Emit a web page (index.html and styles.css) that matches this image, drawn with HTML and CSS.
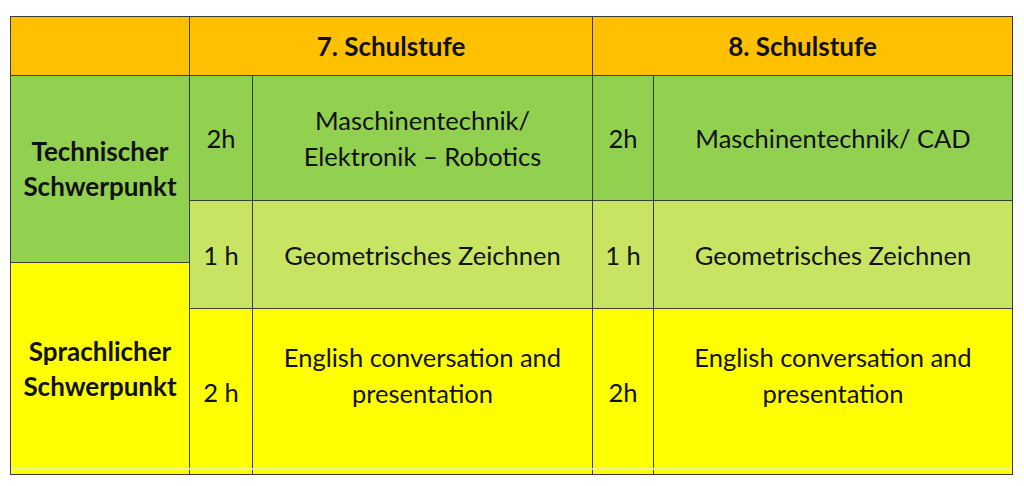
FILE: index.html
```html
<!DOCTYPE html>
<html lang="de">
<head>
<meta charset="utf-8">
<title>Schwerpunkte</title>
<link rel="stylesheet" href="styles.css">
</head>
<body>
<div class="table">
  <div class="cell orange corner"></div>
  <div class="cell orange head span-a">7. Schulstufe</div>
  <div class="cell orange head span-b">8. Schulstufe</div>

  <div class="cell green side tech">Technischer<br>Schwerpunkt</div>
  <div class="cell green r1">2h</div>
  <div class="cell green r1">Maschinentechnik/<br>Elektronik – Robotics</div>
  <div class="cell green r1">2h</div>
  <div class="cell green r1">Maschinentechnik/ CAD</div>

  <div class="cell lime r2">1 h</div>
  <div class="cell lime r2">Geometrisches Zeichnen</div>
  <div class="cell lime r2">1 h</div>
  <div class="cell lime r2">Geometrisches Zeichnen</div>

  <div class="cell yellow side lang">Sprachlicher<br>Schwerpunkt</div>
  <div class="cell yellow r3">2 h</div>
  <div class="cell yellow r3 lift">English conversation and<br>presentation</div>
  <div class="cell yellow r3">2h</div>
  <div class="cell yellow r3 lift">English conversation and<br>presentation</div>
  <div class="streak"></div>
</div>
</body>
</html>
```

FILE: styles.css
```css
html, body {
  margin: 0;
  padding: 0;
  background: #ffffff;
}

body {
  padding: 16px 0 0 10px;
  font-family: Lato, "Liberation Sans", sans-serif;
  color: #000000;
}

.table {
  position: relative;
  display: grid;
  width: 1003px;
  grid-template-columns: 178px 62px 339px 60px 358px;
  grid-template-rows: 58px 124px 61px 45px 165px;
  gap: 1px;
  padding: 1px;
  box-sizing: border-box;
  background: #3c3c3c;
}

.cell {
  display: flex;
  align-items: center;
  justify-content: center;
  text-align: center;
  font-size: 25.5px;
  line-height: 36px;
  color: #111111;
}

.orange { background: #ffc000; }
.green { background: #92d050; }
.lime { background: #c7e562; }
.yellow { background: #ffff00; }

.head {
  font-weight: 700;
  font-size: 26px;
}

.span-a { grid-column: 2 / 4; }
.span-b { grid-column: 4 / 6; }

.side {
  font-weight: 700;
  font-size: 26px;
  line-height: 35px;
}

.tech {
  grid-column: 1;
  grid-row: 2 / 4;
}

.lang {
  grid-column: 1;
  grid-row: 4 / 6;
}

.r1 { grid-row: 2; }
.r2 { grid-row: 3 / 5; }
.r3 { grid-row: 5; }

.lift {
  padding-bottom: 34px;
}

.streak {
  position: absolute;
  left: 1px;
  right: 1px;
  bottom: 5px;
  height: 2px;
  background: rgba(235, 235, 225, 0.75);
}
```
